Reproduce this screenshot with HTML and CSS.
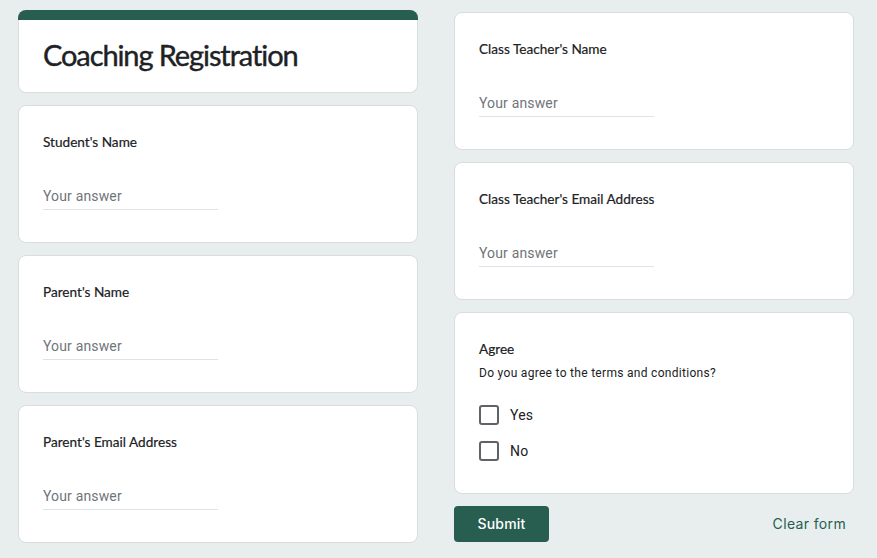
FILE: index.html
```html
<!DOCTYPE html>
<html lang="en">
<head>
<meta charset="utf-8">
<title>Coaching Registration</title>
<link rel="stylesheet" href="styles.css">
</head>
<body>
<main class="page">
  <section class="column column-left">
    <header class="card title-card">
      <div class="title-bar"></div>
      <h1 class="title">Coaching Registration</h1>
    </header>
    <div class="card question">
      <div class="label">Student's Name</div>
      <div class="answer">Your answer</div>
    </div>
    <div class="card question">
      <div class="label">Parent's Name</div>
      <div class="answer">Your answer</div>
    </div>
    <div class="card question">
      <div class="label">Parent's Email Address</div>
      <div class="answer">Your answer</div>
    </div>
  </section>
  <section class="column column-right">
    <div class="card question">
      <div class="label">Class Teacher's Name</div>
      <div class="answer">Your answer</div>
    </div>
    <div class="card question">
      <div class="label">Class Teacher's Email Address</div>
      <div class="answer">Your answer</div>
    </div>
    <div class="card agree">
      <div class="label agree-label">Agree</div>
      <div class="description">Do you agree to the terms and conditions?</div>
      <div class="options">
        <div class="option"><span class="checkbox"></span><span class="option-text">Yes</span></div>
        <div class="option"><span class="checkbox"></span><span class="option-text">No</span></div>
      </div>
    </div>
    <div class="actions">
      <button class="submit" type="button">Submit</button>
      <button class="clear" type="button">Clear form</button>
    </div>
  </section>
</main>
</body>
</html>
```
FILE: styles.css
```css
* { box-sizing: border-box; }
html, body { margin: 0; height: 100%; }
body {
  background: #e8eeee;
  font-family: "Roboto", "Liberation Sans", sans-serif;
  color: #202124;
  overflow: hidden;
}
.page {
  display: flex;
  gap: 36px;
  padding-left: 18px;
}
.column {
  width: 400px;
  display: flex;
  flex-direction: column;
  gap: 12px;
}
.column-left { padding-top: 10px; }
.column-right { padding-top: 12px; }
.card {
  background: #fff;
  border: 1px solid #dadce0;
  border-radius: 8px;
}
.title-card {
  height: 83px;
  border-top: 0;
}
.title-bar {
  height: 10px;
  margin: 0 -1px;
  border-radius: 8px 8px 0 0;
  background: #275e50;
}
.title {
  margin: 0;
  padding: 17px 0 0 24px;
  font-family: "Lato", sans-serif;
  font-weight: 400;
  font-size: 29px;
  line-height: 36px;
  letter-spacing: -1.1px;
  -webkit-text-stroke: 0.4px #202124;
  color: #202124;
}
.question {
  height: 138px;
  padding: 26px 24px 0;
}
.label {
  font-family: "Lato", sans-serif;
  font-size: 13.6px;
  line-height: 20px;
  -webkit-text-stroke: 0.2px #202124;
  color: #202124;
}
.answer {
  width: 175px;
  margin-top: 34px;
  height: 24px;
  border-bottom: 1px solid #e0e2e5;
  font-size: 14px;
  line-height: 20px;
  letter-spacing: 0.15px;
  color: #70757a;
}
.agree {
  height: 182px;
  padding: 26px 24px 0;
}
.description {
  margin-top: 6px;
  font-size: 12px;
  line-height: 16px;
  letter-spacing: 0.3px;
}
.options {
  margin-top: 24px;
  display: flex;
  flex-direction: column;
  gap: 16px;
}
.option {
  display: flex;
  align-items: center;
  gap: 11px;
  height: 20px;
}
.checkbox {
  width: 20px;
  height: 20px;
  border: 2px solid #5f6368;
  border-radius: 3px;
}
.option-text {
  font-size: 14px;
  letter-spacing: 0.2px;
}
.actions {
  display: flex;
  justify-content: space-between;
  align-items: center;
  padding-right: 8px;
}
.submit {
  width: 95px;
  height: 36px;
  padding: 0 0 1px;
  border: 0;
  border-radius: 4px;
  background: #275e50;
  color: #fff;
  font-family: "Inter", sans-serif;
  font-weight: 500;
  font-size: 14px;
  letter-spacing: 0.2px;
}
.clear {
  padding: 0 0 1px;
  border: 0;
  background: none;
  color: #275e50;
  font-family: "Inter", sans-serif;
  font-weight: 400;
  font-size: 14px;
  letter-spacing: 0.35px;
}
```
